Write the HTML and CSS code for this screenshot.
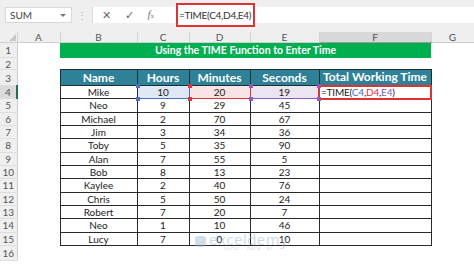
FILE: index.html
```html
<!DOCTYPE html>
<html lang="en">
<head>
  <meta charset="UTF-8" />
  <title>TIME Function</title>
  <link rel="stylesheet" href="styles.css">
</head>
<body>
  <div class="formula-bar">
    <div class="name-box">SUM <span class="caret"></span></div>
    <div class="grip">⋮</div>
    <div class="fx-area">
      <div class="fx-buttons">
        <span class="btn-x">✕</span>
        <span class="btn-ok">✓</span>
        <span class="btn-fx"><i>f</i><small>x</small></span>
      </div>
      <div class="formula-input">
        <span class="formula-box">=TIME(C4,D4,E4)</span>
      </div>
    </div>
  </div>

  <table class="sheet">
    <colgroup>
      <col style="width:17px">
      <col style="width:43px">
      <col style="width:77px">
      <col style="width:52px">
      <col style="width:61px">
      <col style="width:69px">
      <col style="width:112px">
      <col style="width:43px">
    </colgroup>
    <tr class="col-heads">
      <th class="corner"><span class="tri"></span></th>
      <th>A</th><th>B</th><th>C</th><th>D</th><th>E</th><th class="sel">F</th><th>G</th>
    </tr>
    <tr class="r1">
      <th class="rh">1</th><td></td>
      <td colspan="5" class="title">Using the TIME Function to Enter Time</td><td></td>
    </tr>
    <tr class="r2"><th class="rh">2</th><td></td><td></td><td></td><td></td><td></td><td></td><td></td></tr>
    <tr class="r3">
      <th class="rh">3</th><td></td>
      <td class="head">Name</td><td class="head">Hours</td><td class="head">Minutes</td><td class="head">Seconds</td><td class="head">Total Working Time</td><td></td>
    </tr>
    <tr class="row">
      <th class="rh sel-row">4</th><td></td>
      <td class="d">Mike</td>
      <td class="d ref ref-c">10<span class="h tl"></span><span class="h tr"></span><span class="h bl"></span><span class="h br"></span></td>
      <td class="d ref ref-d">20<span class="h tl"></span><span class="h tr"></span><span class="h bl"></span><span class="h br"></span></td>
      <td class="d ref ref-e">19<span class="h tl"></span><span class="h tr"></span><span class="h bl"></span><span class="h br"></span></td>
      <td class="d active">=TIME(<span class="c-blue">C4</span>,<span class="c-red">D4</span>,<span class="c-purple">E4</span>)</td>
      <td></td>
    </tr>
    <tr class="row"><th class="rh">5</th><td></td><td class="d">Neo</td><td class="d">9</td><td class="d">29</td><td class="d">45</td><td class="d"></td><td></td></tr>
    <tr class="row"><th class="rh">6</th><td></td><td class="d">Michael</td><td class="d">2</td><td class="d">70</td><td class="d">67</td><td class="d"></td><td></td></tr>
    <tr class="row"><th class="rh">7</th><td></td><td class="d">Jim</td><td class="d">3</td><td class="d">34</td><td class="d">36</td><td class="d"></td><td></td></tr>
    <tr class="row"><th class="rh">8</th><td></td><td class="d">Toby</td><td class="d">5</td><td class="d">35</td><td class="d">90</td><td class="d"></td><td></td></tr>
    <tr class="row"><th class="rh">9</th><td></td><td class="d">Alan</td><td class="d">7</td><td class="d">55</td><td class="d">5</td><td class="d"></td><td></td></tr>
    <tr class="row"><th class="rh">10</th><td></td><td class="d">Bob</td><td class="d">8</td><td class="d">13</td><td class="d">23</td><td class="d"></td><td></td></tr>
    <tr class="row"><th class="rh">11</th><td></td><td class="d">Kaylee</td><td class="d">2</td><td class="d">40</td><td class="d">76</td><td class="d"></td><td></td></tr>
    <tr class="row"><th class="rh">12</th><td></td><td class="d">Chris</td><td class="d">5</td><td class="d">50</td><td class="d">24</td><td class="d"></td><td></td></tr>
    <tr class="row"><th class="rh">13</th><td></td><td class="d">Robert</td><td class="d">7</td><td class="d">20</td><td class="d">7</td><td class="d"></td><td></td></tr>
    <tr class="row"><th class="rh">14</th><td></td><td class="d">Neo</td><td class="d">1</td><td class="d">10</td><td class="d">46</td><td class="d"></td><td></td></tr>
    <tr class="row"><th class="rh">15</th><td></td><td class="d">Lucy</td><td class="d">7</td><td class="d">0</td><td class="d">10</td><td class="d"></td><td></td></tr>
    <tr class="r16"><th class="rh">16</th><td></td><td></td><td></td><td></td><td></td><td></td><td></td></tr>
  </table>

  <div class="watermark">
    <span class="wm-logo"></span>
    <div class="wm-text">
      <span class="wm-name">exceldemy</span>
      <span class="wm-tag">EXCEL · DATA · BI</span>
    </div>
  </div>
</body>
</html>
```

FILE: styles.css
```css
body {
  margin: 0;
  width: 474px;
  height: 264px;
  overflow: hidden;
  background: #fff;
  font-family: 'Lato', 'Liberation Sans', sans-serif;
  color: #222;
  position: relative;
}

/* formula bar */
.formula-bar {
  height: 32px;
  background: #efefef;
  display: flex;
  align-items: center;
  box-sizing: border-box;
  padding: 0 0 2px 5px;
}

.name-box {
  width: 67px;
  height: 16px;
  background: #fff;
  border: 1px solid #d8d8d8;
  box-sizing: border-box;
  font-size: 10px;
  color: #444;
  line-height: 14px;
  padding-left: 4px;
  position: relative;
}

.caret {
  position: absolute;
  right: 5px;
  top: 6px;
  border-left: 3px solid transparent;
  border-right: 3px solid transparent;
  border-top: 3px solid #777;
}

.grip {
  width: 20px;
  text-align: center;
  color: #aaa;
  font-size: 10px;
}

.fx-area {
  flex: 1;
  height: 16px;
  background: #fff;
  display: flex;
  align-items: center;
  border-left: 1px solid #d8d8d8;
}

.fx-buttons {
  width: 78px;
  box-sizing: border-box;
  display: flex;
  justify-content: space-around;
  color: #666;
  font-size: 11px;
  padding: 0 10px 0 2px;
}

.btn-fx {
  font-family: 'Liberation Serif', serif;
  color: #777;
}

.btn-fx small {
  font-size: 7px;
}

.formula-input {
  flex: 1;
  height: 16px;
  display: flex;
  align-items: center;
  padding-left: 5px;
}

.formula-box {
  border: 2px solid #e03232;
  height: 24px;
  box-sizing: border-box;
  padding: 0 2px 0 1px;
  line-height: 20px;
  font-size: 10px;
  letter-spacing: -0.3px;
  color: #333;
  background: #fff;
}

/* sheet */
.sheet {
  border-collapse: collapse;
  table-layout: fixed;
  width: 474px;
}

.sheet td,
.sheet th {
  padding: 0;
  font-size: 10px;
  line-height: 10px;
  font-weight: normal;
  white-space: nowrap;
  overflow: hidden;
}

.sheet .col-heads th {
  height: 10px;
  background: #efefef;
  border-right: 1px solid #d4d4d4;
  border-bottom: 1px solid #cfcfcf;
  color: #555;
  font-size: 10px;
  line-height: 9px;
}

.sheet .col-heads th.sel {
  background: #d8d8d8;
  border-bottom: 1px solid #9c9c9c;
}

.corner {
  position: relative;
}

.tri {
  position: absolute;
  right: 1px;
  bottom: 1px;
  border-left: 7px solid transparent;
  border-bottom: 7px solid #c8c8c8;
}

.sheet .rh {
  background: #efefef;
  border-right: 1px solid #cfcfcf;
  border-bottom: 1px solid #dedede;
  color: #555;
  font-size: 10px;
  text-align: center;
}

.sheet .rh.sel-row {
  background: #dadada;
  border-right: 2px solid #217346;
}

.r1 { height: 15px; }
.r2 { height: 12px; }
.r3 { height: 16px; }
.row { height: 13.33px; }
.r16 { height: 15px; }

.sheet .title {
  background: #00b050;
  color: #fff;
  font-weight: bold;
  font-size: 10.5px;
  text-align: center;
}

.sheet .head {
  background: #2f8197;
  color: #fff;
  font-weight: bold;
  font-size: 12px;
  line-height: 12px;
  text-align: center;
  border: 1px solid #1f2f36;
}

.sheet .d {
  border: 1px solid #2a2a2a;
  text-align: center;
  color: #222;
}

.sheet .ref {
  position: relative;
  overflow: visible;
}

.sheet .ref-c {
  background: #dfe8f4;
  border: 1px solid #4a72c4;
}

.sheet .ref-d {
  background: #f8e4e4;
  border: 1px solid #d9363e;
}

.sheet .ref-e {
  background: #ebe5f1;
  border: 1px solid #8a5bc0;
}

.h {
  position: absolute;
  width: 4px;
  height: 4px;
}

.ref-c .h { background: #4a72c4; }
.ref-d .h { background: #d9363e; }
.ref-e .h { background: #8a5bc0; }

.tl { left: -2px; top: -2px; }
.tr { right: -3px; top: -2px; }
.bl { left: -2px; bottom: -3px; }
.br { right: -3px; bottom: -3px; }

.sheet .active {
  border: 2px solid #e03232;
  text-align: left;
  padding-left: 1px;
  letter-spacing: -0.2px;
}

.c-blue { color: #3f6fc9; }
.c-red { color: #d9363e; }
.c-purple { color: #8a5bc0; }

/* watermark over the sheet */
.watermark {
  position: absolute;
  left: 195px;
  top: 232px;
  display: flex;
  align-items: center;
  gap: 3px;
  opacity: 0.45;
}

.wm-logo {
  width: 11px;
  height: 11px;
  border-radius: 3px;
  background: #9fb8d4;
}

.wm-text {
  display: flex;
  flex-direction: column;
  align-items: center;
  line-height: 1;
}

.wm-name {
  font-size: 15px;
  color: #8faccd;
  font-family: 'Open Sans', sans-serif;
  letter-spacing: 0.5px;
}

.wm-tag {
  font-size: 4px;
  color: #9aa;
  letter-spacing: 1px;
}
```
